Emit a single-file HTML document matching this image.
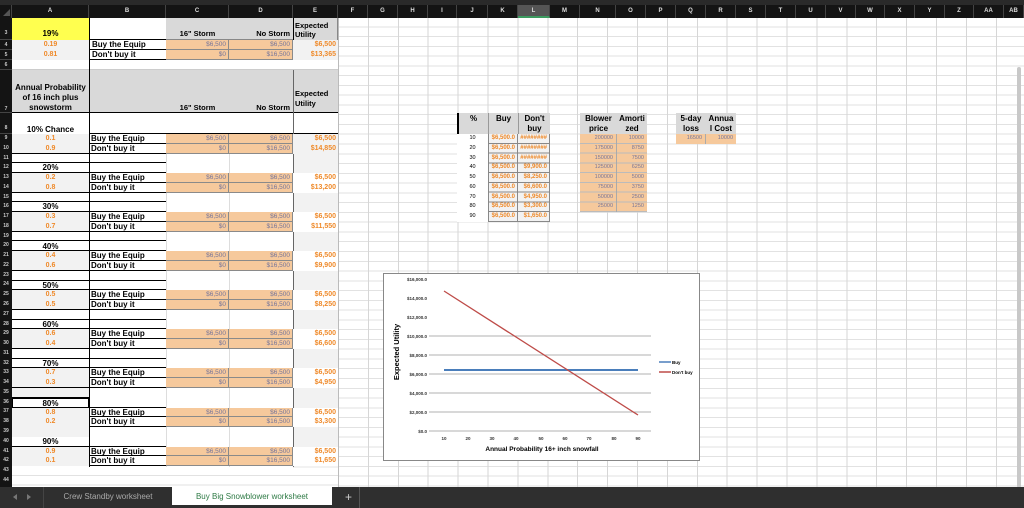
<!DOCTYPE html>
<html><head><meta charset="utf-8"><style>
*{margin:0;padding:0;box-sizing:border-box}
body{width:1024px;height:508px;overflow:hidden;background:#fff;position:relative;font-family:"Liberation Sans",sans-serif;font-weight:bold}
.abs{position:absolute}
.grid{position:absolute;left:338px;top:18px;width:686px;height:470px;
background-image:repeating-linear-gradient(90deg,#d6d6d6 0 1px,transparent 1px 29.9px),repeating-linear-gradient(180deg,transparent 0 8.77px,#e2e2e2 8.77px 9.77px);background-position:0 0,0 -0.5px}
.ch{position:absolute;top:5px;height:13px;background:#141414;color:#ddd;font-size:6px;text-align:center;line-height:13px;border-right:1px solid #444}
.rh{position:absolute;left:0;width:12px;background:#141414;color:#ccc;font-size:5px;text-align:center;border-bottom:1px solid #444}
.c{position:absolute;height:9.8px;font-size:7px;line-height:10.5px;overflow:hidden;white-space:nowrap}
.A{left:12px;width:77px;text-align:center}
.B{left:89px;width:77px;padding-left:2px;font-size:8px;color:#000}
.C{left:166px;width:63px;text-align:right;padding-right:2px}
.D{left:229px;width:64px;text-align:right;padding-right:2px}
.E{left:293px;width:45px;text-align:right;padding-right:2px}
.g{background:#f2f2f2}
.w{background:#fff}
.o{background:#f6c99c;color:#75759a;font-weight:normal;font-size:6.5px;border-right:1px solid #8a8a8a;border-bottom:1px solid #8a8a8a}
.or{color:#ef8a2a}
.bk{border-bottom:1px solid #000}
.hd{background:#d9d9d9}
</style></head><body>
<div class="abs" style="left:0;top:0;width:1024px;height:5px;background:#2a2a2a"></div>
<div class="grid"></div>
<div class="ch" style="left:0;width:12px;background:#141414"><div style="position:absolute;left:3px;top:4px;width:0;height:0;border-left:7px solid transparent;border-bottom:7px solid #555"></div></div>
<div class="ch" style="left:12px;width:77px">A</div>
<div class="ch" style="left:89px;width:77px">B</div>
<div class="ch" style="left:166px;width:63px">C</div>
<div class="ch" style="left:229px;width:64px">D</div>
<div class="ch" style="left:293px;width:45px">E</div>
<div class="ch" style="left:338px;width:30px">F</div>
<div class="ch" style="left:368px;width:30px">G</div>
<div class="ch" style="left:398px;width:30px">H</div>
<div class="ch" style="left:428px;width:29px">I</div>
<div class="ch" style="left:457px;width:31px">J</div>
<div class="ch" style="left:488px;width:30px">K</div>
<div class="ch" style="left:518px;width:32px;background:#555;border-bottom:2px solid #3c9a5f">L</div>
<div class="ch" style="left:550px;width:30px">M</div>
<div class="ch" style="left:580px;width:36px">N</div>
<div class="ch" style="left:616px;width:30px">O</div>
<div class="ch" style="left:646px;width:30px">P</div>
<div class="ch" style="left:676px;width:30px">Q</div>
<div class="ch" style="left:706px;width:30px">R</div>
<div class="ch" style="left:736px;width:30px">S</div>
<div class="ch" style="left:766px;width:30px">T</div>
<div class="ch" style="left:796px;width:30px">U</div>
<div class="ch" style="left:826px;width:30px">V</div>
<div class="ch" style="left:856px;width:29px">W</div>
<div class="ch" style="left:885px;width:30px">X</div>
<div class="ch" style="left:915px;width:30px">Y</div>
<div class="ch" style="left:945px;width:29px">Z</div>
<div class="ch" style="left:974px;width:30px">AA</div>
<div class="ch" style="left:1004px;width:20px">AB</div>
<div class="rh" style="top:18px;height:22px;line-height:30px">3</div>
<div class="rh" style="top:40px;height:10px;line-height:10px">4</div>
<div class="rh" style="top:50px;height:10px;line-height:10px">5</div>
<div class="rh" style="top:60px;height:10px;line-height:10px">6</div>
<div class="rh" style="top:70px;height:43px;line-height:78px">7</div>
<div class="rh" style="top:113px;height:21px;line-height:30px">8</div>
<div class="abs" style="left:0;top:134px;width:12px;height:354px;background:#141414;color:#ccc;font-size:5px;text-align:center;line-height:9.77px">9<br>10<br>11<br>12<br>13<br>14<br>15<br>16<br>17<br>18<br>19<br>20<br>21<br>22<br>23<br>24<br>25<br>26<br>27<br>28<br>29<br>30<br>31<br>32<br>33<br>34<br>35<br>36<br>37<br>38<br>39<br>40<br>41<br>42<br>43<br>44<br>45</div>

<div class="abs" style="left:12px;top:18px;width:326px;height:470px;background:#fff"></div>
<div class="abs" style="left:293px;top:134px;width:45px;height:334px;background:#f2f2f2"></div>
<div class="abs" style="left:12px;top:466px;width:326px;height:22px;background:repeating-linear-gradient(180deg,transparent 0 8.77px,#e2e2e2 8.77px 9.77px)"></div>
<div class="abs" style="left:12px;top:18px;width:77px;height:22px;background:#ffff4f;font-size:8px;text-align:center;line-height:31px">19%</div>
<div class="abs" style="left:89px;top:18px;width:77px;height:22px;border-left:1px solid #000;border-bottom:1px solid #000"></div>
<div class="abs hd" style="left:166px;top:18px;width:63px;height:22px;font-size:7.5px;text-align:center;line-height:32px;border-bottom:1px solid #888">16" Storm</div>
<div class="abs hd" style="left:229px;top:18px;width:64px;height:22px;font-size:7.5px;text-align:right;padding-right:3px;line-height:32px;border-bottom:1px solid #888">No Storm</div>
<div class="abs hd" style="left:293px;top:18px;width:45px;height:22px;font-size:7.5px;padding-left:1px;line-height:9px;padding-top:3px;border-left:1px solid #000;border-right:1px solid #888">Expected Utility</div>
<div class="c A g or" style="top:40px">0.19</div>
<div class="c B bk" style="top:40px;border-left:1px solid #000">Buy the Equip</div>
<div class="c C o" style="top:40px">$6,500</div><div class="c D o" style="top:40px">$6,500</div><div class="c E g or" style="top:40px">$6,500</div>
<div class="c A g or" style="top:50px">0.81</div>
<div class="c B bk" style="top:50px;border-left:1px solid #000">Don't buy it</div>
<div class="c C o" style="top:50px">$0</div><div class="c D o" style="top:50px">$16,500</div><div class="c E g or" style="top:50px">$13,365</div>
<div class="abs" style="left:12px;top:69px;width:326px;height:1px;background:#ccc"></div>
<div class="abs hd" style="left:12px;top:70px;width:77px;height:43px;font-size:8px;text-align:center;line-height:10px;padding-top:13px;border-bottom:1px solid #000">Annual Probability of 16 inch plus snowstorm</div>
<div class="abs hd" style="left:89px;top:70px;width:77px;height:43px;border-left:1px solid #000;border-bottom:1px solid #000"></div>
<div class="abs hd" style="left:166px;top:70px;width:63px;height:43px;font-size:7.5px;text-align:center;line-height:76px;border-bottom:1px solid #000">16" Storm</div>
<div class="abs hd" style="left:229px;top:70px;width:64px;height:43px;font-size:7.5px;text-align:right;padding-right:3px;line-height:76px;border-bottom:1px solid #000">No Storm</div>
<div class="abs hd" style="left:293px;top:70px;width:45px;height:43px;font-size:7.5px;padding:19px 0 0 1px;line-height:10px;border-left:1px solid #000;border-bottom:1px solid #000">Expected Utility</div>
<div class="abs" style="left:12px;top:113px;width:77px;height:21px;font-size:8px;text-align:center;line-height:34px">10% Chance</div>
<div class="abs" style="left:89px;top:113px;width:77px;height:21px;border-left:1px solid #000;border-bottom:1px solid #000"></div>
<div class="abs" style="left:293px;top:113px;width:45px;height:21px;border-left:1px solid #000;border-bottom:1px solid #000"></div>
<div class="abs" style="left:166px;top:133px;width:127px;height:1px;background:#000"></div>
<div class="abs" style="left:89px;top:18px;width:1px;height:449px;background:#000"></div>
<div class="abs" style="left:293px;top:70px;width:1px;height:397px;background:#666"></div>
<div class="abs" style="left:338px;top:18px;width:1px;height:470px;background:#bbb"></div>
<div class="abs" style="left:166px;top:134px;width:1px;height:333px;background:#ddd"></div>
<div class="abs" style="left:229px;top:134px;width:1px;height:333px;background:#ddd"></div>

<div class="abs" style="left:0;top:134px;width:338px;height:30px">
<div class="c A g or" style="top:0">0.1</div><div class="c B bk" style="top:0">Buy the Equip</div><div class="c C o" style="top:0">$6,500</div><div class="c D o" style="top:0">$6,500</div><div class="c E g or" style="top:0">$6,500</div>
<div class="c A g or bk" style="top:9.8px">0.9</div><div class="c B bk" style="top:9.8px">Don't buy it</div><div class="c C o" style="top:9.8px">$0</div><div class="c D o" style="top:9.8px">$16,500</div><div class="c E g or" style="top:9.8px">$14,850</div>
<div class="c A w bk" style="top:19.5px"></div><div class="c B bk" style="top:19.5px"></div>
</div>

<div class="abs" style="left:0;top:163.3px;width:338px;height:40px">
<div class="c A w bk" style="top:0;font-size:8px">20%</div><div class="c B bk" style="top:0"></div>
<div class="c A g or" style="top:9.8px">0.2</div><div class="c B bk" style="top:9.8px">Buy the Equip</div><div class="c C o" style="top:9.8px">$6,500</div><div class="c D o" style="top:9.8px">$6,500</div><div class="c E w or" style="top:9.8px">$6,500</div>
<div class="c A g or bk" style="top:19.5px">0.8</div><div class="c B bk" style="top:19.5px">Don't buy it</div><div class="c C o" style="top:19.5px">$0</div><div class="c D o" style="top:19.5px">$16,500</div><div class="c E w or" style="top:19.5px">$13,200</div>
<div class="c A w bk" style="top:29.3px"></div><div class="c B bk" style="top:29.3px"></div>
</div>
<div class="abs" style="left:0;top:202.4px;width:338px;height:40px">
<div class="c A w bk" style="top:0;font-size:8px">30%</div><div class="c B bk" style="top:0"></div>
<div class="c A g or" style="top:9.8px">0.3</div><div class="c B bk" style="top:9.8px">Buy the Equip</div><div class="c C o" style="top:9.8px">$6,500</div><div class="c D o" style="top:9.8px">$6,500</div><div class="c E w or" style="top:9.8px">$6,500</div>
<div class="c A g or bk" style="top:19.5px">0.7</div><div class="c B bk" style="top:19.5px">Don't buy it</div><div class="c C o" style="top:19.5px">$0</div><div class="c D o" style="top:19.5px">$16,500</div><div class="c E w or" style="top:19.5px">$11,550</div>
<div class="c A w bk" style="top:29.3px"></div><div class="c B bk" style="top:29.3px"></div>
</div>
<div class="abs" style="left:0;top:241.5px;width:338px;height:40px">
<div class="c A w bk" style="top:0;font-size:8px">40%</div><div class="c B bk" style="top:0"></div>
<div class="c A g or" style="top:9.8px">0.4</div><div class="c B bk" style="top:9.8px">Buy the Equip</div><div class="c C o" style="top:9.8px">$6,500</div><div class="c D o" style="top:9.8px">$6,500</div><div class="c E w or" style="top:9.8px">$6,500</div>
<div class="c A g or bk" style="top:19.5px">0.6</div><div class="c B bk" style="top:19.5px">Don't buy it</div><div class="c C o" style="top:19.5px">$0</div><div class="c D o" style="top:19.5px">$16,500</div><div class="c E w or" style="top:19.5px">$9,900</div>
<div class="c A w bk" style="top:29.3px"></div><div class="c B bk" style="top:29.3px"></div>
</div>
<div class="abs" style="left:0;top:280.6px;width:338px;height:40px">
<div class="c A w bk" style="top:0;font-size:8px">50%</div><div class="c B bk" style="top:0"></div>
<div class="c A g or" style="top:9.8px">0.5</div><div class="c B bk" style="top:9.8px">Buy the Equip</div><div class="c C o" style="top:9.8px">$6,500</div><div class="c D o" style="top:9.8px">$6,500</div><div class="c E w or" style="top:9.8px">$6,500</div>
<div class="c A g or bk" style="top:19.5px">0.5</div><div class="c B bk" style="top:19.5px">Don't buy it</div><div class="c C o" style="top:19.5px">$0</div><div class="c D o" style="top:19.5px">$16,500</div><div class="c E w or" style="top:19.5px">$8,250</div>
<div class="c A w bk" style="top:29.3px"></div><div class="c B bk" style="top:29.3px"></div>
</div>
<div class="abs" style="left:0;top:319.6px;width:338px;height:40px">
<div class="c A w bk" style="top:0;font-size:8px">60%</div><div class="c B bk" style="top:0"></div>
<div class="c A g or" style="top:9.8px">0.6</div><div class="c B bk" style="top:9.8px">Buy the Equip</div><div class="c C o" style="top:9.8px">$6,500</div><div class="c D o" style="top:9.8px">$6,500</div><div class="c E w or" style="top:9.8px">$6,500</div>
<div class="c A g or bk" style="top:19.5px">0.4</div><div class="c B bk" style="top:19.5px">Don't buy it</div><div class="c C o" style="top:19.5px">$0</div><div class="c D o" style="top:19.5px">$16,500</div><div class="c E w or" style="top:19.5px">$6,600</div>
<div class="c A w bk" style="top:29.3px"></div><div class="c B bk" style="top:29.3px"></div>
</div>
<div class="abs" style="left:0;top:358.7px;width:338px;height:40px">
<div class="c A w bk" style="top:0;font-size:8px">70%</div><div class="c B bk" style="top:0"></div>
<div class="c A g or" style="top:9.8px">0.7</div><div class="c B bk" style="top:9.8px">Buy the Equip</div><div class="c C o" style="top:9.8px">$6,500</div><div class="c D o" style="top:9.8px">$6,500</div><div class="c E w or" style="top:9.8px">$6,500</div>
<div class="c A g or bk" style="top:19.5px">0.3</div><div class="c B bk" style="top:19.5px">Don't buy it</div><div class="c C o" style="top:19.5px">$0</div><div class="c D o" style="top:19.5px">$16,500</div><div class="c E w or" style="top:19.5px">$4,950</div>
<div class="c A g bk" style="top:29.3px"></div><div class="c B" style="top:29.3px"></div>
</div>
<div class="abs" style="left:0;top:397.8px;width:338px;height:40px">
<div class="c A w bk" style="top:0;font-size:8px;border:1px solid #000">80%</div><div class="c B bk" style="top:0"></div>
<div class="c A g or" style="top:9.8px">0.8</div><div class="c B bk" style="top:9.8px">Buy the Equip</div><div class="c C o" style="top:9.8px">$6,500</div><div class="c D o" style="top:9.8px">$6,500</div><div class="c E w or" style="top:9.8px">$6,500</div>
<div class="c A g or" style="top:19.5px">0.2</div><div class="c B bk" style="top:19.5px">Don't buy it</div><div class="c C o" style="top:19.5px">$0</div><div class="c D o" style="top:19.5px">$16,500</div><div class="c E w or" style="top:19.5px">$3,300</div>
<div class="c A g" style="top:29.3px"></div><div class="c B" style="top:29.3px"></div>
</div>
<div class="abs" style="left:0;top:436.9px;width:338px;height:30px">
<div class="c A w bk" style="top:0;font-size:8px">90%</div><div class="c B bk" style="top:0"></div>
<div class="c A g or" style="top:9.8px">0.9</div><div class="c B bk" style="top:9.8px">Buy the Equip</div><div class="c C o" style="top:9.8px">$6,500</div><div class="c D o" style="top:9.8px">$6,500</div><div class="c E w or" style="top:9.8px">$6,500</div>
<div class="c A g or" style="top:19.5px">0.1</div><div class="c B bk" style="top:19.5px">Don't buy it</div><div class="c C o" style="top:19.5px">$0</div><div class="c D o" style="top:19.5px">$16,500</div><div class="c E w or" style="top:19.5px">$1,650</div>
</div>

<div class="abs hd" style="left:457px;top:113px;width:31px;height:21px;border-left:2px solid #000;font-size:8px;text-align:center;line-height:12px">%</div>
<div class="abs hd" style="left:488px;top:113px;width:30px;height:21px;font-size:8px;text-align:center;line-height:12px;border-left:1px solid #999">Buy</div>
<div class="abs hd" style="left:518px;top:113px;width:32px;height:21px;font-size:8px;text-align:center;line-height:10px;padding-top:1px;border-left:1px solid #999">Don't<br>buy</div>
<div class="abs hd" style="left:580px;top:113px;width:37px;height:21px;font-size:8px;text-align:center;line-height:10px;padding-top:1px">Blower<br>price</div>
<div class="abs hd" style="left:617px;top:113px;width:30px;height:21px;font-size:8px;text-align:center;line-height:10px;padding-top:1px;white-space:nowrap">Amorti<br>zed</div>
<div class="abs hd" style="left:676px;top:113px;width:30px;height:21px;font-size:8px;text-align:center;line-height:10px;padding-top:1px;white-space:nowrap">5-day<br>loss</div>
<div class="abs hd" style="left:706px;top:113px;width:30px;height:21px;font-size:8px;text-align:center;line-height:10px;padding-top:1px;white-space:nowrap">Annua<br>l Cost</div>

<div class="abs" style="left:457px;top:134px;width:31px;height:88px;background:#fff;font-size:5.5px;text-align:center;line-height:9.77px;font-weight:normal">10<br>20<br>30<br>40<br>50<br>60<br>70<br>80<br>90</div>
<div class="abs or" style="left:488px;top:134px;width:30px;height:88px;background:#f2f2f2;font-size:6px;text-align:right;padding-right:2px;line-height:9.77px;border-left:1px solid #888;border-right:1px solid #888;background-image:repeating-linear-gradient(180deg,transparent 0 8.77px,#888 8.77px 9.77px)">$6,500.0<br>$6,500.0<br>$6,500.0<br>$6,500.0<br>$6,500.0<br>$6,500.0<br>$6,500.0<br>$6,500.0<br>$6,500.0</div>
<div class="abs or" style="left:518px;top:134px;width:32px;height:88px;background:#f2f2f2;font-size:6px;text-align:right;padding-right:2px;line-height:9.77px;border-right:1px solid #888;background-image:repeating-linear-gradient(180deg,transparent 0 8.77px,#888 8.77px 9.77px)">########<br>########<br>########<br>$9,900.0<br>$8,250.0<br>$6,600.0<br>$4,950.0<br>$3,300.0<br>$1,650.0</div>
<div class="abs" style="left:580px;top:134px;width:37px;height:78px;background:#f6c99c;color:#75759a;font-weight:normal;font-size:5.5px;text-align:right;padding-right:3px;line-height:9.77px;border-right:1px solid #aaa;background-image:repeating-linear-gradient(180deg,transparent 0 8.77px,#bbb 8.77px 9.77px)">200000<br>175000<br>150000<br>125000<br>100000<br>75000<br>50000<br>25000</div>
<div class="abs" style="left:617px;top:134px;width:30px;height:78px;background:#f6c99c;color:#75759a;font-weight:normal;font-size:5.5px;text-align:right;padding-right:3px;line-height:9.77px;background-image:repeating-linear-gradient(180deg,transparent 0 8.77px,#bbb 8.77px 9.77px)">10000<br>8750<br>7500<br>6250<br>5000<br>3750<br>2500<br>1250</div>
<div class="abs" style="left:676px;top:134px;width:30px;height:9.8px;background:#f6c99c;color:#75759a;font-weight:normal;font-size:5.5px;text-align:right;padding-right:3px;line-height:9.77px;border-right:1px solid #aaa">16500</div>
<div class="abs" style="left:706px;top:134px;width:30px;height:9.8px;background:#f6c99c;color:#75759a;font-weight:normal;font-size:5.5px;text-align:right;padding-right:3px;line-height:9.77px">10000</div>

<svg class="abs" style="left:383px;top:273px" width="318" height="188" viewBox="383 273 318 188">
<rect x="383.5" y="273.5" width="316" height="187" fill="#fff" stroke="#888"/>
<g stroke="#999" stroke-width="0.8">
<line x1="429" y1="336" x2="651" y2="336"/><line x1="429" y1="355" x2="651" y2="355"/><line x1="429" y1="374" x2="651" y2="374"/><line x1="429" y1="393" x2="651" y2="393"/><line x1="429" y1="412" x2="651" y2="412"/><line x1="429" y1="431" x2="651" y2="431"/>
</g>
<line x1="444" y1="370" x2="638" y2="370" stroke="#4a7ebb" stroke-width="2"/>
<line x1="444" y1="291" x2="638" y2="415" stroke="#be4b48" stroke-width="1.3"/>
<g font-family="Liberation Sans" font-size="4.5" fill="#333" text-anchor="end">
<text x="427" y="281">$16,000.0</text><text x="427" y="300">$14,000.0</text><text x="427" y="319">$12,000.0</text><text x="427" y="338">$10,000.0</text><text x="427" y="357">$8,000.0</text><text x="427" y="376">$6,000.0</text><text x="427" y="395">$4,000.0</text><text x="427" y="414">$2,000.0</text><text x="427" y="433">$0.0</text>
</g>
<g font-family="Liberation Sans" font-size="4.5" fill="#333" text-anchor="middle">
<text x="444" y="440">10</text><text x="468" y="440">20</text><text x="492" y="440">30</text><text x="516" y="440">40</text><text x="541" y="440">50</text><text x="565" y="440">60</text><text x="589" y="440">70</text><text x="614" y="440">80</text><text x="638" y="440">90</text>
</g>
<text x="542" y="451" font-family="Liberation Sans" font-weight="bold" font-size="6.5" text-anchor="middle">Annual Probability 16+ inch snowfall</text>
<text transform="translate(399 352) rotate(-90)" font-family="Liberation Sans" font-weight="bold" font-size="7.5" text-anchor="middle">Expected Utility</text>
<line x1="659" y1="362" x2="671" y2="362" stroke="#4a7ebb" stroke-width="1.5"/>
<line x1="659" y1="372" x2="671" y2="372" stroke="#be4b48" stroke-width="1.5"/>
<text x="672" y="364" font-family="Liberation Sans" font-size="4.5">Buy</text>
<text x="672" y="374" font-family="Liberation Sans" font-size="4.5">Don't buy</text>
</svg>

<div class="abs" style="left:1017px;top:67px;width:4px;height:421px;background:#c8c8c8;border-radius:2px"></div>

<div class="abs" style="left:0;top:487px;width:1024px;height:21px;background:#2f2f2f"></div>
<div class="abs" style="left:13px;top:494px;width:0;height:0;border-top:3px solid transparent;border-bottom:3px solid transparent;border-right:4px solid #777"></div>
<div class="abs" style="left:27px;top:494px;width:0;height:0;border-top:3px solid transparent;border-bottom:3px solid transparent;border-left:4px solid #777"></div>
<div class="abs" style="left:43px;top:487px;width:129px;height:21px;color:#aaa;font-size:8px;font-weight:normal;text-align:center;line-height:20px;border-left:1px solid #444">Crew Standby worksheet</div>
<div class="abs" style="left:172px;top:487px;width:160px;height:18px;background:#fff;color:#2e7a45;font-size:8px;font-weight:normal;text-align:center;line-height:19px">Buy Big Snowblower worksheet</div>
<div class="abs" style="left:338px;top:487px;width:22px;height:21px;color:#ccc;font-size:12px;font-weight:normal;text-align:center;line-height:20px;border-right:1px solid #555">+</div>
</body></html>
